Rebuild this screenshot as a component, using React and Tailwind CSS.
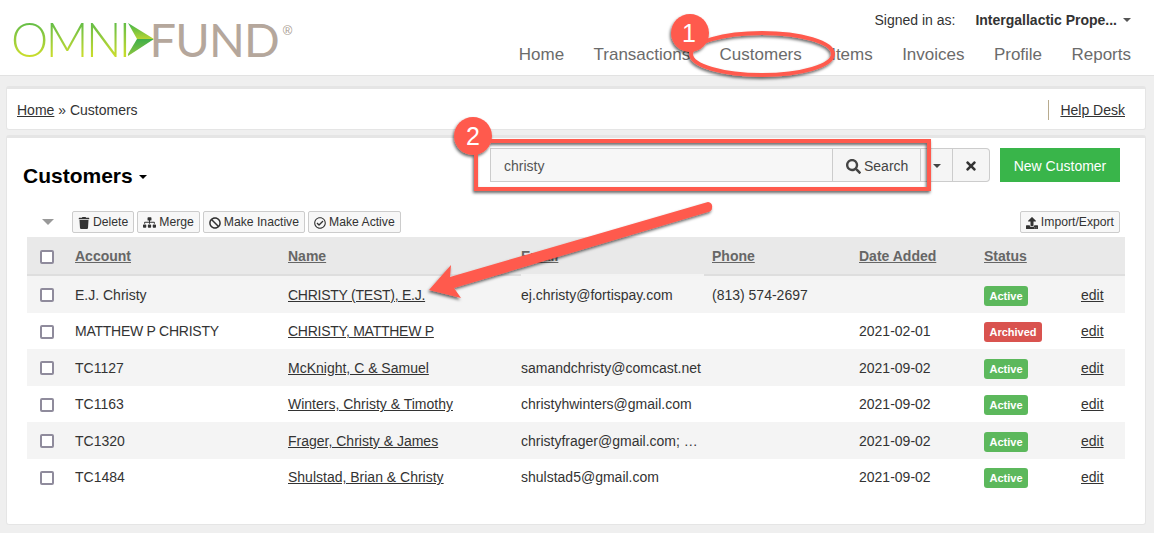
import { FaTrash, FaSitemap, FaBan, FaRegCheckCircle, FaUpload, FaSearch, FaTimes } from 'react-icons/fa';

const rows = [
  { account: 'E.J. Christy', name: 'CHRISTY (TEST), E.J.', email: 'ej.christy@fortispay.com', phone: '(813) 574-2697', date: '', status: 'Active', capsName: true },
  { account: 'MATTHEW P CHRISTY', name: 'CHRISTY, MATTHEW P', email: '', phone: '', date: '2021-02-01', status: 'Archived', capsName: true, capsAccount: true },
  { account: 'TC1127', name: 'McKnight, C & Samuel', email: 'samandchristy@comcast.net', phone: '', date: '2021-09-02', status: 'Active' },
  { account: 'TC1163', name: 'Winters, Christy & Timothy', email: 'christyhwinters@gmail.com', phone: '', date: '2021-09-02', status: 'Active' },
  { account: 'TC1320', name: 'Frager, Christy & James', email: 'christyfrager@gmail.com; …', phone: '', date: '2021-09-02', status: 'Active' },
  { account: 'TC1484', name: 'Shulstad, Brian & Christy', email: 'shulstad5@gmail.com', phone: '', date: '2021-09-02', status: 'Active' },
];

const nav = ['Home', 'Transactions', 'Customers', 'Items', 'Invoices', 'Profile', 'Reports'];
const cols = 'grid grid-cols-[48px_213px_233px_191px_147px_125px_97px_44px] items-center';

function Caret({ className }) {
  return <span className={`inline-block w-0 h-0 border-x-[4px] border-x-transparent border-t-[4px] ${className}`} />;
}

function Logo() {
  return (
    <div className="flex items-center h-[75px] pl-[11px] pt-[4px] font-['Lato',sans-serif] text-[47px] leading-none">
      <span className="font-light tracking-[-2.5px] text-transparent bg-clip-text bg-gradient-to-b from-[#45b649] to-[#dce31c]">OMNI</span>
      <svg width="27" height="34" viewBox="0 0 27 34" className="-ml-[1px] -mr-[5px] shrink-0">
        <defs>
          <linearGradient id="chevTop" x1="0" y1="0" x2="0" y2="1">
            <stop offset="0" stopColor="#3fb54a" />
            <stop offset="1" stopColor="#b7d433" />
          </linearGradient>
          <linearGradient id="chevBottom" x1="0" y1="0" x2="0" y2="1">
            <stop offset="0" stopColor="#3fae49" />
            <stop offset="1" stopColor="#8cc63f" />
          </linearGradient>
        </defs>
        <polygon points="0,0 26,16 9,16" fill="url(#chevTop)" />
        <polygon points="26,16 0,33 0,31 9,16" fill="url(#chevBottom)" />
      </svg>
      <span className="text-[#b5a79c] tracking-[-0.9px]">FUND</span>
      <span className="self-start mt-[20px] ml-[4px] text-[13px] text-[#a89a8f] font-['Liberation_Sans',sans-serif]">®</span>
    </div>
  );
}

function ToolButton({ icon, label }) {
  return (
    <button className="flex items-center gap-[3px] h-[22px] px-[5px] pt-[1px] border border-[#ccc] rounded-[2px] bg-[#f7f7f7] text-[12.2px] text-[#333]">
      {icon}
      {label}
    </button>
  );
}

function Checkbox() {
  return <span className="block w-[14px] h-[14px] ml-[13px] border-2 border-[#8f8b9c] rounded-[2px] bg-white" />;
}

function Badge({ status }) {
  const color = status === 'Active' ? 'bg-[#5cb85c]' : 'bg-[#d9534f]';
  return <span className={`inline-block px-[5.5px] py-[3px] rounded-[3px] text-white text-[11px] leading-[14px] font-bold ${color}`}>{status}</span>;
}

// screenshot annotations painted on top of the page
function Annotations() {
  return (
    <svg width="1154" height="533" className="absolute inset-0 pointer-events-none">
      <defs>
        <filter id="shade" x="-20%" y="-20%" width="140%" height="140%">
          <feDropShadow dx="-1" dy="2" stdDeviation="1.5" floodColor="#000" floodOpacity="0.6" />
        </filter>
      </defs>
      <rect x="521" y="274" width="183" height="2" fill="#f3f3f3" />
      <g filter="url(#shade)">
        <ellipse cx="762" cy="54" rx="71" ry="21" fill="none" stroke="#ff5a4d" strokeWidth="4" />
        <rect x="476" y="141" width="453" height="48" fill="none" stroke="#ff5a4d" strokeWidth="4" />
        <path d="M429,290 L451,265 L450,277 L708,202 Q713,203 712,208 Q712,211 708,212 L454,288 L461,298 Z" fill="#ff5a4d" />
        <circle cx="690" cy="33" r="19" fill="#ff5a4d" />
        <circle cx="473" cy="136" r="19" fill="#ff5a4d" />
      </g>
      <text x="689" y="42" textAnchor="middle" fill="#fff" fontSize="25" fontFamily="Liberation Sans, sans-serif">1</text>
      <text x="473" y="145" textAnchor="middle" fill="#fff" fontSize="25" fontFamily="Liberation Sans, sans-serif">2</text>
    </svg>
  );
}

export default function App() {
  return (
    <div className="relative w-[1154px] h-[533px] overflow-hidden bg-[#efefef] font-['Liberation_Sans',sans-serif] text-[14px] text-[#333] antialiased">
      <header className="flex justify-between h-[76px] bg-white border-b border-[#e2e2e2]">
        <Logo />
        <div className="flex flex-col items-end pr-[23px]">
          <div className="flex items-center h-[16px] mt-[12px] text-[14px] text-[#333]">
            <span>Signed in as:</span>
            <span className="ml-[20px] font-bold">Intergallactic Prope...</span>
            <Caret className="ml-[6px] border-t-[#555]" />
          </div>
          <nav className="flex gap-[29.4px] mt-[17px] text-[17px] leading-[20px] text-[#6b6b6b]">
            {nav.map(n => <a key={n}>{n}</a>)}
          </nav>
        </div>
      </header>

      <div className="flex items-center justify-between h-[44px] ml-[6px] mr-[8px] mt-[10px] pt-[2px] pl-[10px] pr-[20px] bg-white border-t-[3px] border-[#e5e5e5] border-b border-x rounded-[3px]">
        <div><a className="underline">Home</a> » Customers</div>
        <div className="flex items-center h-[20px] pl-[11px] border-l border-[#b8ab8e]">
          <a className="underline">Help Desk</a>
        </div>
      </div>

      <main className="h-[390px] ml-[6px] mr-[8px] mt-[5px] pt-[10px] bg-white border-t-[3px] border-[#e5e5e5] border-b border-x rounded-[3px]">
        <div className="flex items-center h-[34px] pl-[16px] pr-[25px]">
          <h1 className="mt-[21px] text-[21px] leading-[24px] font-bold text-black">Customers</h1>
          <Caret className="mt-[23px] ml-[6px] border-t-black" />
          <div className="flex h-[34px] ml-auto text-[#444]">
            <input readOnly value="christy" className="w-[343px] px-[13px] pt-[2px] border border-[#ccc] bg-[#f7f7f7] text-[14px] text-[#555] outline-none" />
            <button className="flex items-center gap-[3px] w-[88px] pl-[13px] pt-[2px] border-y border-r border-[#ccc] bg-[#f5f5f5]">
              <FaSearch size={15} /> Search
            </button>
            <button className="flex items-center justify-center w-[32px] pt-[2px] border-y border-r border-[#ccc] bg-[#f5f5f5]">
              <Caret className="border-t-[#444]" />
            </button>
            <button className="flex items-center justify-center w-[37px] pt-[2px] border-y border-r border-[#ccc] rounded-r-[4px] bg-[#f5f5f5]">
              <FaTimes size={14} className="text-[#333]" />
            </button>
          </div>
          <button className="w-[120px] h-[34px] ml-[10px] pt-[2px] bg-[#39b54a] text-white text-[14px]">New Customer</button>
        </div>

        <div className="flex items-center h-[22px] mt-[29px] ml-[35px] pr-[25px]">
          <Caret className="border-x-[6px] border-t-[6px] border-t-[#999]" />
          <div className="flex gap-[3px] ml-[18px]">
            <ToolButton icon={<FaTrash size={12} />} label="Delete" />
            <ToolButton icon={<FaSitemap size={13} />} label="Merge" />
            <ToolButton icon={<FaBan size={12} />} label="Make Inactive" />
            <ToolButton icon={<FaRegCheckCircle size={12} />} label="Make Active" />
          </div>
          <div className="ml-auto">
            <ToolButton icon={<FaUpload size={12} />} label="Import/Export" />
          </div>
        </div>

        <div className="mt-[4px] mx-[20px]">
          <div className={`${cols} h-[39px] pt-[2px] bg-[#e9e9e9] border-b-2 border-[#dedede] font-bold text-[#666]`}>
            <Checkbox />
            {['Account', 'Name', 'Email', 'Phone', 'Date Added', 'Status'].map(h => <a key={h} className="underline">{h}</a>)}
            <span />
          </div>
          {rows.map((r, i) => (
            <div key={r.account} className={`${cols} h-[36.5px] pt-[2px] ${i % 2 === 0 ? 'bg-[#f4f4f4]' : 'bg-white'}`}>
              <Checkbox />
              <span className={r.capsAccount ? 'tracking-[-0.25px]' : ''}>{r.account}</span>
              <a className={`underline ${r.capsName ? 'tracking-[-0.25px]' : ''}`}>{r.name}</a>
              <span>{r.email}</span>
              <span>{r.phone}</span>
              <span>{r.date}</span>
              <span><Badge status={r.status} /></span>
              <a className="underline">edit</a>
            </div>
          ))}
        </div>
      </main>

      <Annotations />
    </div>
  );
}
